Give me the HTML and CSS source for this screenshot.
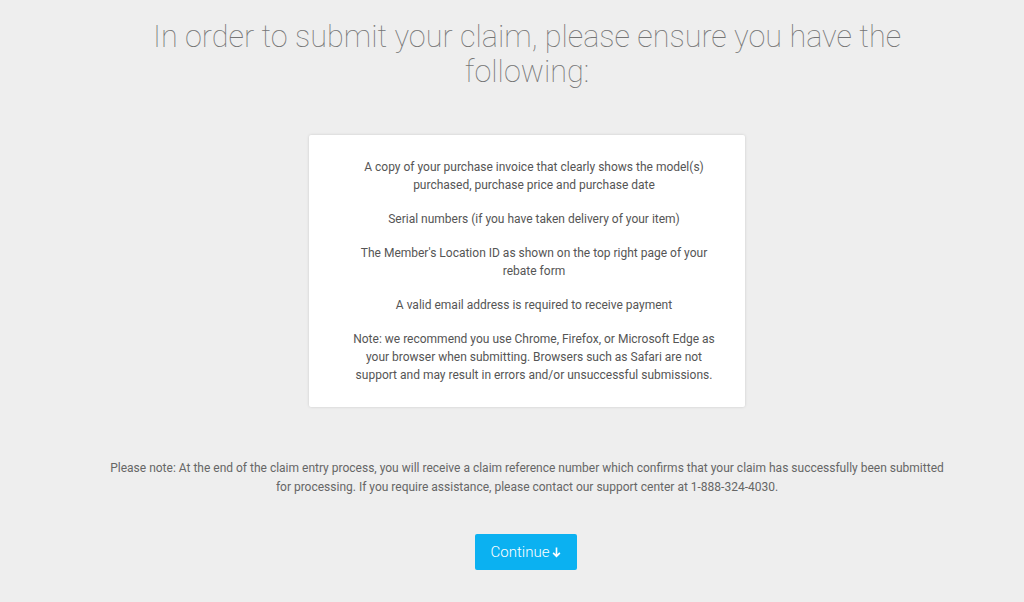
FILE: index.html
```html
<!DOCTYPE html>
<html lang="en">
<head>
    <meta charset="UTF-8">
    <meta name="viewport" content="width=device-width, initial-scale=1.0">
    <title>Submit Your Claim</title>
    <link rel="stylesheet" href="styles.css">
</head>
<body>

<div class="intro">
    <h1>In order to submit your claim, please ensure you have the following:</h1>

    <!-- Requirements -->
    <div class="requirements">
        <p>A copy of your purchase invoice that clearly shows the model(s) purchased, purchase price and purchase date</p>
        <p>Serial numbers (if you have taken delivery of your item)</p>
        <p>The Member's Location ID as shown on the top right page of your rebate form</p>
        <p>A valid email address is required to receive payment</p>
        <p>Note: we recommend you use Chrome, Firefox, or Microsoft Edge as your browser when submitting. Browsers such as Safari are not support and may result in errors and/or unsuccessful submissions.</p>
    </div>

    <p class="note">Please note: At the end of the claim entry process, you will receive a claim reference number which confirms that your claim has successfully been submitted for processing. If you require assistance, please contact our support center at 1-888-324-4030.</p>

    <div class="actions">
        <a href="#" class="btn-continue">Continue
            <svg class="arrow" viewBox="0 0 10 12" width="9" height="11"><path d="M5 11.5 L0.6 7 L1.9 5.7 L4.1 7.9 L4.1 0.5 L5.9 0.5 L5.9 7.9 L8.1 5.7 L9.4 7 Z" fill="#fff"/></svg>
        </a>
    </div>
</div>

</body>
</html>
```

FILE: styles.css
```css
body {
    font-family: Roboto, "Liberation Sans", Arial, sans-serif;
    margin: 0;
    padding: 0;
    background-color: #eeeeee;
    color: #555;
}

.intro {
    display: flex;
    flex-direction: column;
    align-items: center;
    padding: 19px 0 0 30px;
}

.intro h1 {
    max-width: 790px;
    margin: 0;
    font-size: 30.6px;
    font-weight: 100;
    line-height: 35px;
    color: #757575;
    text-align: center;
}

.requirements {
    width: 366px;
    margin-top: 46px;
    padding: 23px 28px 23px 42px;
    background-color: #fff;
    border-radius: 2px;
    box-shadow: 0 0 3px rgba(0, 0, 0, 0.15);
    text-align: center;
}

.requirements p {
    margin: 0 0 16px;
    font-size: 12px;
    line-height: 18px;
    color: #555;
}

.requirements p:last-child {
    margin-bottom: 0;
}

.note {
    max-width: 842px;
    margin: 52px 0 0;
    font-size: 12px;
    line-height: 19px;
    color: #666;
    text-align: center;
}

.actions {
    margin-top: 37px;
    margin-right: 2px;
}

.btn-continue {
    display: inline-flex;
    align-items: center;
    gap: 3px;
    padding: 0 16px;
    height: 36px;
    background-color: #0bb1f1;
    color: #fff;
    font-size: 15px;
    font-weight: 300;
    text-decoration: none;
    border-radius: 2px;
}

.btn-continue .arrow {
    display: block;
    margin-top: 1px;
}
```
